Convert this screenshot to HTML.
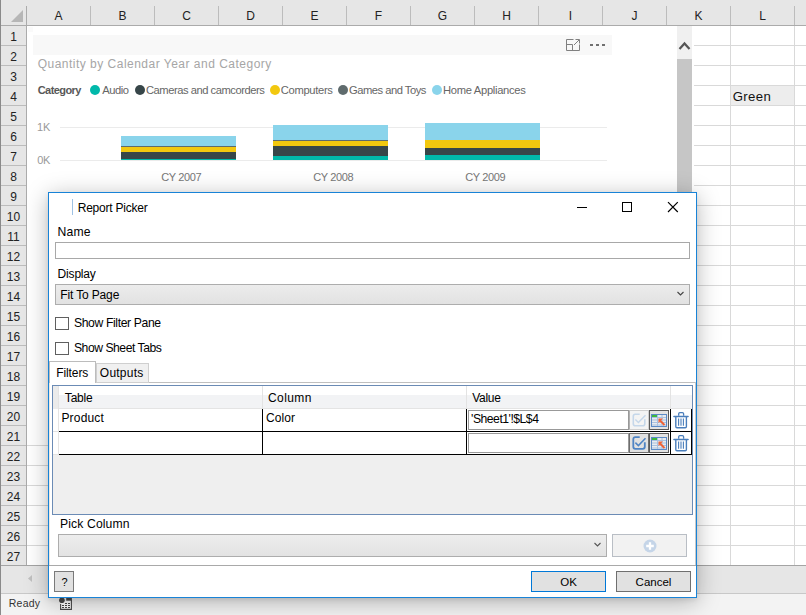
<!DOCTYPE html>
<html><head><meta charset="utf-8"><style>
html,body{margin:0;padding:0;width:806px;height:615px;overflow:hidden;background:#fff;position:relative}
body>div,body>svg{position:absolute;box-sizing:content-box}
.t{font-family:"Liberation Sans",sans-serif;white-space:pre}
</style></head><body>
<div style="left:0px;top:0px;width:806px;height:26px;background:#e6e6e6;"></div>
<div style="left:0px;top:25px;width:806px;height:1px;background:#ababab;"></div>
<div style="left:26px;top:6px;width:1px;height:19px;background:#bcbcbc;"></div>
<div style="left:90px;top:6px;width:1px;height:19px;background:#bcbcbc;"></div>
<div style="left:154px;top:6px;width:1px;height:19px;background:#bcbcbc;"></div>
<div style="left:218px;top:6px;width:1px;height:19px;background:#bcbcbc;"></div>
<div style="left:282px;top:6px;width:1px;height:19px;background:#bcbcbc;"></div>
<div style="left:346px;top:6px;width:1px;height:19px;background:#bcbcbc;"></div>
<div style="left:410px;top:6px;width:1px;height:19px;background:#bcbcbc;"></div>
<div style="left:474px;top:6px;width:1px;height:19px;background:#bcbcbc;"></div>
<div style="left:538px;top:6px;width:1px;height:19px;background:#bcbcbc;"></div>
<div style="left:602px;top:6px;width:1px;height:19px;background:#bcbcbc;"></div>
<div style="left:666px;top:6px;width:1px;height:19px;background:#bcbcbc;"></div>
<div style="left:730px;top:6px;width:1px;height:19px;background:#bcbcbc;"></div>
<div style="left:794px;top:6px;width:1px;height:19px;background:#bcbcbc;"></div>
<div class="t" style="left:-41.5px;width:200px;text-align:center;top:10.44px;font-size:12px;line-height:12px;color:#222;font-weight:normal;">A</div>
<div class="t" style="left:22.5px;width:200px;text-align:center;top:10.44px;font-size:12px;line-height:12px;color:#222;font-weight:normal;">B</div>
<div class="t" style="left:86.5px;width:200px;text-align:center;top:10.44px;font-size:12px;line-height:12px;color:#222;font-weight:normal;">C</div>
<div class="t" style="left:150.5px;width:200px;text-align:center;top:10.44px;font-size:12px;line-height:12px;color:#222;font-weight:normal;">D</div>
<div class="t" style="left:214.5px;width:200px;text-align:center;top:10.44px;font-size:12px;line-height:12px;color:#222;font-weight:normal;">E</div>
<div class="t" style="left:278.5px;width:200px;text-align:center;top:10.44px;font-size:12px;line-height:12px;color:#222;font-weight:normal;">F</div>
<div class="t" style="left:342.5px;width:200px;text-align:center;top:10.44px;font-size:12px;line-height:12px;color:#222;font-weight:normal;">G</div>
<div class="t" style="left:406.5px;width:200px;text-align:center;top:10.44px;font-size:12px;line-height:12px;color:#222;font-weight:normal;">H</div>
<div class="t" style="left:470.5px;width:200px;text-align:center;top:10.44px;font-size:12px;line-height:12px;color:#222;font-weight:normal;">I</div>
<div class="t" style="left:534.5px;width:200px;text-align:center;top:10.44px;font-size:12px;line-height:12px;color:#222;font-weight:normal;">J</div>
<div class="t" style="left:598.5px;width:200px;text-align:center;top:10.44px;font-size:12px;line-height:12px;color:#222;font-weight:normal;">K</div>
<div class="t" style="left:662.5px;width:200px;text-align:center;top:10.44px;font-size:12px;line-height:12px;color:#222;font-weight:normal;">L</div>
<svg style="position:absolute;left:0;top:0" width="26" height="25"><polygon points="23,10 23,22 11,22" fill="#b6b6b6"/></svg>
<div style="left:0px;top:26px;width:26px;height:539px;background:#e6e6e6;"></div>
<div style="left:26px;top:6px;width:1px;height:560px;background:#ababab;"></div>
<div style="left:0px;top:45px;width:26px;height:1px;background:#bcbcbc;"></div>
<div class="t" style="left:-86.5px;width:200px;text-align:center;top:30.84px;font-size:12px;line-height:12px;color:#222;font-weight:normal;">1</div>
<div style="left:0px;top:65px;width:26px;height:1px;background:#bcbcbc;"></div>
<div class="t" style="left:-86.5px;width:200px;text-align:center;top:50.84px;font-size:12px;line-height:12px;color:#222;font-weight:normal;">2</div>
<div style="left:0px;top:85px;width:26px;height:1px;background:#bcbcbc;"></div>
<div class="t" style="left:-86.5px;width:200px;text-align:center;top:70.84px;font-size:12px;line-height:12px;color:#222;font-weight:normal;">3</div>
<div style="left:0px;top:105px;width:26px;height:1px;background:#bcbcbc;"></div>
<div class="t" style="left:-86.5px;width:200px;text-align:center;top:90.84px;font-size:12px;line-height:12px;color:#222;font-weight:normal;">4</div>
<div style="left:0px;top:125px;width:26px;height:1px;background:#bcbcbc;"></div>
<div class="t" style="left:-86.5px;width:200px;text-align:center;top:110.84px;font-size:12px;line-height:12px;color:#222;font-weight:normal;">5</div>
<div style="left:0px;top:145px;width:26px;height:1px;background:#bcbcbc;"></div>
<div class="t" style="left:-86.5px;width:200px;text-align:center;top:130.84px;font-size:12px;line-height:12px;color:#222;font-weight:normal;">6</div>
<div style="left:0px;top:165px;width:26px;height:1px;background:#bcbcbc;"></div>
<div class="t" style="left:-86.5px;width:200px;text-align:center;top:150.84px;font-size:12px;line-height:12px;color:#222;font-weight:normal;">7</div>
<div style="left:0px;top:185px;width:26px;height:1px;background:#bcbcbc;"></div>
<div class="t" style="left:-86.5px;width:200px;text-align:center;top:170.84px;font-size:12px;line-height:12px;color:#222;font-weight:normal;">8</div>
<div style="left:0px;top:205px;width:26px;height:1px;background:#bcbcbc;"></div>
<div class="t" style="left:-86.5px;width:200px;text-align:center;top:190.84px;font-size:12px;line-height:12px;color:#222;font-weight:normal;">9</div>
<div style="left:0px;top:225px;width:26px;height:1px;background:#bcbcbc;"></div>
<div class="t" style="left:-86.5px;width:200px;text-align:center;top:210.84px;font-size:12px;line-height:12px;color:#222;font-weight:normal;">10</div>
<div style="left:0px;top:245px;width:26px;height:1px;background:#bcbcbc;"></div>
<div class="t" style="left:-86.5px;width:200px;text-align:center;top:230.84px;font-size:12px;line-height:12px;color:#222;font-weight:normal;">11</div>
<div style="left:0px;top:265px;width:26px;height:1px;background:#bcbcbc;"></div>
<div class="t" style="left:-86.5px;width:200px;text-align:center;top:250.84px;font-size:12px;line-height:12px;color:#222;font-weight:normal;">12</div>
<div style="left:0px;top:285px;width:26px;height:1px;background:#bcbcbc;"></div>
<div class="t" style="left:-86.5px;width:200px;text-align:center;top:270.84px;font-size:12px;line-height:12px;color:#222;font-weight:normal;">13</div>
<div style="left:0px;top:305px;width:26px;height:1px;background:#bcbcbc;"></div>
<div class="t" style="left:-86.5px;width:200px;text-align:center;top:290.84px;font-size:12px;line-height:12px;color:#222;font-weight:normal;">14</div>
<div style="left:0px;top:325px;width:26px;height:1px;background:#bcbcbc;"></div>
<div class="t" style="left:-86.5px;width:200px;text-align:center;top:310.84px;font-size:12px;line-height:12px;color:#222;font-weight:normal;">15</div>
<div style="left:0px;top:345px;width:26px;height:1px;background:#bcbcbc;"></div>
<div class="t" style="left:-86.5px;width:200px;text-align:center;top:330.84px;font-size:12px;line-height:12px;color:#222;font-weight:normal;">16</div>
<div style="left:0px;top:365px;width:26px;height:1px;background:#bcbcbc;"></div>
<div class="t" style="left:-86.5px;width:200px;text-align:center;top:350.84px;font-size:12px;line-height:12px;color:#222;font-weight:normal;">17</div>
<div style="left:0px;top:385px;width:26px;height:1px;background:#bcbcbc;"></div>
<div class="t" style="left:-86.5px;width:200px;text-align:center;top:370.84px;font-size:12px;line-height:12px;color:#222;font-weight:normal;">18</div>
<div style="left:0px;top:405px;width:26px;height:1px;background:#bcbcbc;"></div>
<div class="t" style="left:-86.5px;width:200px;text-align:center;top:390.84px;font-size:12px;line-height:12px;color:#222;font-weight:normal;">19</div>
<div style="left:0px;top:425px;width:26px;height:1px;background:#bcbcbc;"></div>
<div class="t" style="left:-86.5px;width:200px;text-align:center;top:410.84px;font-size:12px;line-height:12px;color:#222;font-weight:normal;">20</div>
<div style="left:0px;top:445px;width:26px;height:1px;background:#bcbcbc;"></div>
<div class="t" style="left:-86.5px;width:200px;text-align:center;top:430.84px;font-size:12px;line-height:12px;color:#222;font-weight:normal;">21</div>
<div style="left:0px;top:465px;width:26px;height:1px;background:#bcbcbc;"></div>
<div class="t" style="left:-86.5px;width:200px;text-align:center;top:450.84px;font-size:12px;line-height:12px;color:#222;font-weight:normal;">22</div>
<div style="left:0px;top:485px;width:26px;height:1px;background:#bcbcbc;"></div>
<div class="t" style="left:-86.5px;width:200px;text-align:center;top:470.84px;font-size:12px;line-height:12px;color:#222;font-weight:normal;">23</div>
<div style="left:0px;top:505px;width:26px;height:1px;background:#bcbcbc;"></div>
<div class="t" style="left:-86.5px;width:200px;text-align:center;top:490.84px;font-size:12px;line-height:12px;color:#222;font-weight:normal;">24</div>
<div style="left:0px;top:525px;width:26px;height:1px;background:#bcbcbc;"></div>
<div class="t" style="left:-86.5px;width:200px;text-align:center;top:510.84px;font-size:12px;line-height:12px;color:#222;font-weight:normal;">25</div>
<div style="left:0px;top:545px;width:26px;height:1px;background:#bcbcbc;"></div>
<div class="t" style="left:-86.5px;width:200px;text-align:center;top:530.84px;font-size:12px;line-height:12px;color:#222;font-weight:normal;">26</div>
<div style="left:0px;top:565px;width:26px;height:1px;background:#bcbcbc;"></div>
<div class="t" style="left:-86.5px;width:200px;text-align:center;top:550.84px;font-size:12px;line-height:12px;color:#222;font-weight:normal;">27</div>
<div style="left:0px;top:0px;width:1px;height:615px;background:#8a8a8a;"></div>
<div style="left:90px;top:26px;width:1px;height:539px;background:#d9d9d9;"></div>
<div style="left:154px;top:26px;width:1px;height:539px;background:#d9d9d9;"></div>
<div style="left:218px;top:26px;width:1px;height:539px;background:#d9d9d9;"></div>
<div style="left:282px;top:26px;width:1px;height:539px;background:#d9d9d9;"></div>
<div style="left:346px;top:26px;width:1px;height:539px;background:#d9d9d9;"></div>
<div style="left:410px;top:26px;width:1px;height:539px;background:#d9d9d9;"></div>
<div style="left:474px;top:26px;width:1px;height:539px;background:#d9d9d9;"></div>
<div style="left:538px;top:26px;width:1px;height:539px;background:#d9d9d9;"></div>
<div style="left:602px;top:26px;width:1px;height:539px;background:#d9d9d9;"></div>
<div style="left:666px;top:26px;width:1px;height:539px;background:#d9d9d9;"></div>
<div style="left:730px;top:26px;width:1px;height:539px;background:#d9d9d9;"></div>
<div style="left:794px;top:26px;width:1px;height:539px;background:#d9d9d9;"></div>
<div style="left:858px;top:26px;width:1px;height:539px;background:#d9d9d9;"></div>
<div style="left:27px;top:45px;width:779px;height:1px;background:#d9d9d9;"></div>
<div style="left:27px;top:65px;width:779px;height:1px;background:#d9d9d9;"></div>
<div style="left:27px;top:85px;width:779px;height:1px;background:#d9d9d9;"></div>
<div style="left:27px;top:105px;width:779px;height:1px;background:#d9d9d9;"></div>
<div style="left:27px;top:125px;width:779px;height:1px;background:#d9d9d9;"></div>
<div style="left:27px;top:145px;width:779px;height:1px;background:#d9d9d9;"></div>
<div style="left:27px;top:165px;width:779px;height:1px;background:#d9d9d9;"></div>
<div style="left:27px;top:185px;width:779px;height:1px;background:#d9d9d9;"></div>
<div style="left:27px;top:205px;width:779px;height:1px;background:#d9d9d9;"></div>
<div style="left:27px;top:225px;width:779px;height:1px;background:#d9d9d9;"></div>
<div style="left:27px;top:245px;width:779px;height:1px;background:#d9d9d9;"></div>
<div style="left:27px;top:265px;width:779px;height:1px;background:#d9d9d9;"></div>
<div style="left:27px;top:285px;width:779px;height:1px;background:#d9d9d9;"></div>
<div style="left:27px;top:305px;width:779px;height:1px;background:#d9d9d9;"></div>
<div style="left:27px;top:325px;width:779px;height:1px;background:#d9d9d9;"></div>
<div style="left:27px;top:345px;width:779px;height:1px;background:#d9d9d9;"></div>
<div style="left:27px;top:365px;width:779px;height:1px;background:#d9d9d9;"></div>
<div style="left:27px;top:385px;width:779px;height:1px;background:#d9d9d9;"></div>
<div style="left:27px;top:405px;width:779px;height:1px;background:#d9d9d9;"></div>
<div style="left:27px;top:425px;width:779px;height:1px;background:#d9d9d9;"></div>
<div style="left:27px;top:445px;width:779px;height:1px;background:#d9d9d9;"></div>
<div style="left:27px;top:465px;width:779px;height:1px;background:#d9d9d9;"></div>
<div style="left:27px;top:485px;width:779px;height:1px;background:#d9d9d9;"></div>
<div style="left:27px;top:505px;width:779px;height:1px;background:#d9d9d9;"></div>
<div style="left:27px;top:525px;width:779px;height:1px;background:#d9d9d9;"></div>
<div style="left:27px;top:545px;width:779px;height:1px;background:#d9d9d9;"></div>
<div style="left:27px;top:565px;width:779px;height:1px;background:#d9d9d9;"></div>
<div style="left:731px;top:86px;width:63px;height:19px;background:#ededed;"></div>
<div class="t" style="left:732.74px;top:90.03px;font-size:13.2px;line-height:13.2px;color:#111;font-weight:normal;letter-spacing:0.350px;">Green</div>
<div style="left:0px;top:566px;width:806px;height:27px;background:#e6e6e6;"></div>
<div style="left:0px;top:565px;width:806px;height:1px;background:#a4a4a4;"></div>
<div style="left:0px;top:593px;width:806px;height:1px;background:#c8c8c8;"></div>
<svg style="position:absolute;left:0;top:566" width="40" height="27"><polygon points="32,9 32,16 28,12.5" fill="#c0c0c0"/></svg>
<div style="left:0px;top:594px;width:806px;height:21px;background:#f3f3f3;"></div>
<div style="left:0px;top:0px;width:1px;height:615px;background:#8a8a8a;"></div>
<div class="t" style="left:8.82px;top:598.21px;font-size:10.5px;line-height:10.5px;color:#333;font-weight:normal;letter-spacing:0.214px;">Ready</div>
<svg style="position:absolute;left:54px;top:593px" width="24" height="22"><rect x="7" y="8" width="10" height="8" fill="#fff"/><circle cx="7.9" cy="7.2" r="2.8" fill="#4a4a4a"/><rect x="12.2" y="3" width="5.7" height="4.7" fill="#4a4a4a"/><path d="M17.4 7V16.4H6.6V11" fill="none" stroke="#4a4a4a" stroke-width="1.1"/><path d="M11 10.5h2M14 10.5h2M8 12.5h2M11 12.5h2M14 12.5h2M8 14.5h2M11 14.5h2M14 14.5h2" stroke="#4a4a4a" stroke-width="1"/></svg>
<div style="left:27px;top:26px;width:667px;height:419px;background:#fff;"></div>
<div style="left:33px;top:35px;width:579px;height:20px;background:#f8f8f8;"></div>
<div style="left:28px;top:27px;width:5px;height:5px;background:#fafafa;"></div>
<svg style="position:absolute;left:565px;top:38px" width="17" height="14"><path d="M8.5 1.5H1.5V12.5H14.5V6.5M1.5 6.5H7.5V12.5M9 7L14 2M10.5 1.5H14.5V5.5" fill="none" stroke="#808080" stroke-width="1"/></svg>
<div style="left:590px;top:44px;width:3px;height:2px;background:#707070;"></div>
<div style="left:596px;top:44px;width:3px;height:2px;background:#707070;"></div>
<div style="left:602px;top:44px;width:3px;height:2px;background:#707070;"></div>
<div class="t" style="left:37.65px;top:58.44px;font-size:12px;line-height:12px;color:#a6a6a6;font-weight:normal;letter-spacing:0.491px;">Quantity by Calendar Year and Category</div>
<div class="t" style="left:37.74px;top:85.29px;font-size:11px;line-height:11px;color:#585858;font-weight:bold;letter-spacing:-0.566px;">Category</div>
<div style="left:90px;top:85px;width:10px;height:10px;border-radius:50%;background:#01B8AA"></div>
<div class="t" style="left:102.15px;top:84.92px;font-size:11.2px;line-height:11.2px;color:#666;font-weight:normal;letter-spacing:-0.435px;">Audio</div>
<div style="left:134.5px;top:85px;width:10px;height:10px;border-radius:50%;background:#374649"></div>
<div class="t" style="left:145.94px;top:84.92px;font-size:11.2px;line-height:11.2px;color:#666;font-weight:normal;letter-spacing:-0.465px;">Cameras and camcorders</div>
<div style="left:269.7px;top:85px;width:10px;height:10px;border-radius:50%;background:#F2C80F"></div>
<div class="t" style="left:280.74px;top:84.92px;font-size:11.2px;line-height:11.2px;color:#666;font-weight:normal;letter-spacing:-0.313px;">Computers</div>
<div style="left:338px;top:85px;width:10px;height:10px;border-radius:50%;background:#5F6B6D"></div>
<div class="t" style="left:349.04px;top:84.92px;font-size:11.2px;line-height:11.2px;color:#666;font-weight:normal;letter-spacing:-0.491px;">Games and Toys</div>
<div style="left:431.8px;top:85px;width:10px;height:10px;border-radius:50%;background:#8AD4EB"></div>
<div class="t" style="left:442.97px;top:84.92px;font-size:11.2px;line-height:11.2px;color:#666;font-weight:normal;letter-spacing:-0.301px;">Home Appliances</div>
<div style="left:60px;top:127px;width:547px;height:1px;background:#ebebeb;"></div>
<div style="left:60px;top:160px;width:547px;height:1px;background:#ebebeb;"></div>
<div class="t" style="left:36.88px;top:122.29px;font-size:11px;line-height:11px;color:#999;font-weight:normal;letter-spacing:0.033px;">1K</div>
<div class="t" style="left:37.29px;top:154.89px;font-size:11px;line-height:11px;color:#999;font-weight:normal;letter-spacing:-0.379px;">0K</div>
<div style="left:121px;top:136px;width:115px;height:10px;background:#8AD4EB;"></div>
<div style="left:121px;top:146px;width:115px;height:1px;background:#5F6B6D;"></div>
<div style="left:121px;top:147px;width:115px;height:5px;background:#F2C80F;"></div>
<div style="left:121px;top:152px;width:115px;height:7px;background:#374649;"></div>
<div style="left:121px;top:159px;width:115px;height:1px;background:#01B8AA;"></div>
<div style="left:273px;top:125px;width:115px;height:15px;background:#8AD4EB;"></div>
<div style="left:273px;top:140px;width:115px;height:1px;background:#5F6B6D;"></div>
<div style="left:273px;top:141px;width:115px;height:5px;background:#F2C80F;"></div>
<div style="left:273px;top:146px;width:115px;height:10px;background:#374649;"></div>
<div style="left:273px;top:156px;width:115px;height:4px;background:#01B8AA;"></div>
<div style="left:425px;top:123px;width:115px;height:17px;background:#8AD4EB;"></div>
<div style="left:425px;top:140px;width:115px;height:8px;background:#F2C80F;"></div>
<div style="left:425px;top:148px;width:115px;height:7px;background:#374649;"></div>
<div style="left:425px;top:155px;width:115px;height:5px;background:#01B8AA;"></div>
<div class="t" style="left:161.15px;top:172.49px;font-size:11px;line-height:11px;color:#777;font-weight:normal;letter-spacing:-0.371px;">CY 2007</div>
<div class="t" style="left:313.25px;top:172.49px;font-size:11px;line-height:11px;color:#777;font-weight:normal;letter-spacing:-0.378px;">CY 2008</div>
<div class="t" style="left:465.15px;top:172.49px;font-size:11px;line-height:11px;color:#777;font-weight:normal;letter-spacing:-0.371px;">CY 2009</div>
<div style="left:677px;top:26px;width:15px;height:419px;background:#f0f0f0;"></div>
<div style="left:677px;top:59px;width:15px;height:386px;background:#c6c6c6;"></div>
<svg style="position:absolute;left:677px;top:38px" width="15" height="16"><path d="M2.5 11L7.5 5.5L12.5 11" fill="none" stroke="#555" stroke-width="2.2"/></svg>
<div style="left:48px;top:192px;width:649px;height:406px;box-shadow:0 4px 22px rgba(0,0,0,0.28),0 2px 5px rgba(0,0,0,0.08);background:#fff"></div>
<div style="left:48px;top:192px;width:647px;height:404px;border:1px solid #1883d7;background:#fff;"></div>
<div style="left:72px;top:199px;width:1px;height:16px;background:#9ec2e4;"></div>
<div class="t" style="left:77.70px;top:202.14px;font-size:12px;line-height:12px;color:#000;font-weight:normal;letter-spacing:-0.225px;">Report Picker</div>
<div style="left:577px;top:207px;width:10px;height:1px;background:#000;"></div>
<div style="left:622px;top:202px;width:8px;height:8px;border:1px solid #000;background:transparent;"></div>
<svg style="position:absolute;left:667px;top:201px" width="13" height="13"><path d="M1 1.2L10.8 11M10.8 1.2L1 11" stroke="#000" stroke-width="1.2"/></svg>
<div class="t" style="left:57.58px;top:226.27px;font-size:12.2px;line-height:12.2px;color:#000;font-weight:normal;letter-spacing:0.131px;">Name</div>
<div style="left:55px;top:242px;width:633px;height:15px;border:1px solid #a8a8a8;background:#fff;"></div>
<div class="t" style="left:57.60px;top:268.44px;font-size:12px;line-height:12px;color:#000;font-weight:normal;letter-spacing:-0.183px;">Display</div>
<div style="left:55px;top:284px;width:633px;height:19px;border:1px solid #adadad;background:linear-gradient(#ececec,#e2e2e2);"></div>
<svg style="position:absolute;left:676px;top:290px" width="10" height="8"><path d="M1.5 2L4.5 5L7.5 2" fill="none" stroke="#444" stroke-width="1.1"/></svg>
<div class="t" style="left:60.30px;top:289.44px;font-size:12px;line-height:12px;color:#000;font-weight:normal;letter-spacing:-0.145px;">Fit To Page</div>
<div style="left:55px;top:317px;width:12px;height:11px;border:1px solid #5f5f5f;background:#fff;"></div>
<div class="t" style="left:73.94px;top:316.97px;font-size:12.2px;line-height:12.2px;color:#000;font-weight:normal;letter-spacing:-0.374px;">Show Filter Pane</div>
<div style="left:55px;top:342px;width:12px;height:11px;border:1px solid #5f5f5f;background:#fff;"></div>
<div class="t" style="left:73.94px;top:341.77px;font-size:12.2px;line-height:12.2px;color:#000;font-weight:normal;letter-spacing:-0.481px;">Show Sheet Tabs</div>
<div style="left:49px;top:382px;width:647px;height:1px;background:#bfbfbf;"></div>
<div style="left:49px;top:383px;width:1px;height:182px;background:#ece8e2;"></div>
<div style="left:695px;top:382px;width:1px;height:184px;background:#c8c8c8;"></div>
<div style="left:49px;top:565px;width:647px;height:1px;background:#a9a9a9;"></div>
<div style="left:96px;top:363px;width:51px;height:18px;border:1px solid #cfcfcf;background:#f0f0f0;"></div>
<div style="left:49px;top:361px;width:45px;height:20px;border:1px solid #bcbcbc;background:#fff;border-bottom:none;height:21px"></div>
<div class="t" style="left:56.20px;top:366.64px;font-size:12px;line-height:12px;color:#000;font-weight:normal;letter-spacing:-0.083px;">Filters</div>
<div class="t" style="left:99.85px;top:367.24px;font-size:12px;line-height:12px;color:#000;font-weight:normal;letter-spacing:0.225px;">Outputs</div>
<div style="left:52px;top:385px;width:639px;height:128px;border:1px solid #6b8bb5;background:#efefef;"></div>
<div style="left:53px;top:386px;width:639px;height:23px;background:linear-gradient(#fff 0,#fff 9px,#f2f3f5 9px);"></div>
<div style="left:53px;top:409px;width:6px;height:46px;background:#fff;"></div>
<div style="left:53px;top:408px;width:639px;height:1px;background:#e4e4e4;"></div>
<div style="left:53px;top:386px;width:5px;height:23px;background:#ebebeb;"></div>
<div style="left:58px;top:409px;width:1px;height:46px;background:#e4e4e4;"></div>
<div style="left:53px;top:431px;width:5px;height:1px;background:#e2e2e2;"></div>
<div style="left:53px;top:454px;width:5px;height:1px;background:#e2e2e2;"></div>
<div style="left:58px;top:386px;width:1px;height:23px;background:#e3e3e3;"></div>
<div style="left:262px;top:386px;width:1px;height:23px;background:#e3e3e3;"></div>
<div style="left:466px;top:386px;width:1px;height:23px;background:#e3e3e3;"></div>
<div style="left:670px;top:386px;width:1px;height:23px;background:#e3e3e3;"></div>
<div style="left:59px;top:409px;width:633px;height:22px;background:#fff;"></div>
<div style="left:59px;top:432px;width:633px;height:22px;background:#fff;"></div>
<div style="left:59px;top:431px;width:633px;height:1px;background:#000;"></div>
<div style="left:59px;top:454px;width:633px;height:1px;background:#000;"></div>
<div style="left:262px;top:409px;width:1px;height:46px;background:#000;"></div>
<div style="left:466px;top:409px;width:1px;height:46px;background:#000;"></div>
<div style="left:670px;top:409px;width:1px;height:46px;background:#000;"></div>
<div style="left:691px;top:409px;width:1px;height:46px;background:#000;"></div>
<div class="t" style="left:64.85px;top:392.34px;font-size:12px;line-height:12px;color:#000;font-weight:normal;letter-spacing:-0.200px;">Table</div>
<div class="t" style="left:268.00px;top:392.34px;font-size:12px;line-height:12px;color:#000;font-weight:normal;letter-spacing:0.400px;">Column</div>
<div class="t" style="left:472.15px;top:392.34px;font-size:12px;line-height:12px;color:#000;font-weight:normal;letter-spacing:-0.263px;">Value</div>
<div class="t" style="left:61.40px;top:412.24px;font-size:12px;line-height:12px;color:#000;font-weight:normal;letter-spacing:0.192px;">Product</div>
<div class="t" style="left:266.10px;top:412.34px;font-size:12px;line-height:12px;color:#000;font-weight:normal;letter-spacing:0.050px;">Color</div>
<div style="left:468px;top:410px;width:159px;height:18px;border:1px solid #999;background:#fff;"></div>
<div style="left:468px;top:433px;width:159px;height:18px;border:1px solid #999;background:#fff;"></div>
<div class="t" style="left:471.09px;top:412.97px;font-size:12.2px;line-height:12.2px;color:#000;font-weight:normal;letter-spacing:-0.495px;">'Sheet1'!$L$4</div>
<div style="left:629px;top:410px;width:18px;height:18px;border:1px solid #cfcfcf;background:#f4f4f4;border-left-color:#b0b0b0"></div>
<svg style="position:absolute;left:629px;top:410px" width="20" height="20"><path d="M10.7 4.2H6.3Q4.3 4.2 4.3 6.2V13.8Q4.3 15.8 6.3 15.8H13.8Q15.8 15.8 15.8 13.8V9.3" fill="none" stroke="#c5d7ea" stroke-width="1.6"/><path d="M6.4 9.6L9.4 12.6L16.5 5.2" fill="none" stroke="#c5d7ea" stroke-width="1.4"/></svg>
<div style="left:649px;top:410px;width:18px;height:18px;border:1px solid #5a5a5a;background:#e3e3e3;"></div>
<svg style="position:absolute;left:649px;top:410px" width="20" height="20"><rect x="2.5" y="4.5" width="15" height="12" fill="#e8ebef" stroke="#5b8ac6"/><rect x="3" y="5" width="5.5" height="2.5" fill="#3db83d"/><path d="M3 7.5H17M3 10H17M3 12.5H17M3 15H17M8.5 5V16M13 5V16" stroke="#a9c1e0" stroke-width="1"/><path d="M15.5 15L11 10.5" fill="none" stroke="#f26336" stroke-width="2"/><path d="M9.5 8.5H14L9.5 13Z" fill="#f26336"/></svg>
<svg style="position:absolute;left:673px;top:411px" width="16" height="18"><path d="M5.7 4.8V2.8Q5.7 1.6 6.9 1.6H9.4Q10.6 1.6 10.6 2.8V4.8" fill="none" stroke="#4a7ebb" stroke-width="1.3"/><path d="M1 5.5H15" stroke="#4a7ebb" stroke-width="1.6" stroke-linecap="round"/><path d="M2.8 6V15.5Q2.8 16.8 4 16.8H12.2Q13.4 16.8 13.4 15.5V6" fill="none" stroke="#4a7ebb" stroke-width="1.4"/><path d="M5.6 7.5V14.7M8 7.5V14.7M10.4 7.5V14.7" stroke="#4a7ebb" stroke-width="1.1"/></svg>
<div style="left:629px;top:433px;width:18px;height:18px;border:1px solid #6e6e6e;background:#e1e1e1;"></div>
<svg style="position:absolute;left:629px;top:433px" width="20" height="20"><path d="M10.7 4.2H6.3Q4.3 4.2 4.3 6.2V13.8Q4.3 15.8 6.3 15.8H13.8Q15.8 15.8 15.8 13.8V9.3" fill="none" stroke="#4f84c4" stroke-width="1.8"/><path d="M6.4 9.6L9.4 12.6L16.5 5.2" fill="none" stroke="#4f84c4" stroke-width="1.5"/></svg>
<div style="left:649px;top:433px;width:18px;height:18px;border:1px solid #5a5a5a;background:#e3e3e3;"></div>
<svg style="position:absolute;left:649px;top:433px" width="20" height="20"><rect x="2.5" y="4.5" width="15" height="12" fill="#e8ebef" stroke="#5b8ac6"/><rect x="3" y="5" width="5.5" height="2.5" fill="#3db83d"/><path d="M3 7.5H17M3 10H17M3 12.5H17M3 15H17M8.5 5V16M13 5V16" stroke="#a9c1e0" stroke-width="1"/><path d="M15.5 15L11 10.5" fill="none" stroke="#f26336" stroke-width="2"/><path d="M9.5 8.5H14L9.5 13Z" fill="#f26336"/></svg>
<svg style="position:absolute;left:673px;top:434px" width="16" height="18"><path d="M5.7 4.8V2.8Q5.7 1.6 6.9 1.6H9.4Q10.6 1.6 10.6 2.8V4.8" fill="none" stroke="#4a7ebb" stroke-width="1.3"/><path d="M1 5.5H15" stroke="#4a7ebb" stroke-width="1.6" stroke-linecap="round"/><path d="M2.8 6V15.5Q2.8 16.8 4 16.8H12.2Q13.4 16.8 13.4 15.5V6" fill="none" stroke="#4a7ebb" stroke-width="1.4"/><path d="M5.6 7.5V14.7M8 7.5V14.7M10.4 7.5V14.7" stroke="#4a7ebb" stroke-width="1.1"/></svg>
<div class="t" style="left:60.08px;top:518.27px;font-size:12.2px;line-height:12.2px;color:#000;font-weight:normal;letter-spacing:0.101px;">Pick Column</div>
<div style="left:58px;top:534px;width:547px;height:21px;border:1px solid #adadad;background:linear-gradient(#ededed,#e3e3e3);"></div>
<svg style="position:absolute;left:593px;top:541px" width="10" height="8"><path d="M1.5 2L4.5 5L7.5 2" fill="none" stroke="#555" stroke-width="1.1"/></svg>
<div style="left:612px;top:534px;width:73px;height:21px;border:1px solid #b9bec5;background:#f2f2f2;"></div>
<svg style="position:absolute;left:643px;top:539px" width="14" height="14"><circle cx="7" cy="7" r="6.5" fill="#c5d5e8"/><path d="M7 3.2V10.8M3.2 7H10.8" stroke="#fff" stroke-width="2.3"/></svg>
<div style="left:54px;top:571px;width:18px;height:19px;border:1px solid #7a7a7a;background:#e1e1e1;"></div>
<div class="t" style="left:-35.5px;width:200px;text-align:center;top:577.29px;font-size:11px;line-height:11px;color:#000;font-weight:normal;">?</div>
<div style="left:531px;top:571px;width:73px;height:19px;border:1px solid #0078d7;background:#e1e1e1;"></div>
<div class="t" style="left:468.5px;width:200px;text-align:center;top:577.07px;font-size:11.5px;line-height:11.5px;color:#000;font-weight:normal;">OK</div>
<div style="left:616px;top:571px;width:73px;height:19px;border:1px solid #6f6f6f;background:#e1e1e1;"></div>
<div class="t" style="left:553.5px;width:200px;text-align:center;top:577.07px;font-size:11.5px;line-height:11.5px;color:#000;font-weight:normal;">Cancel</div>
</body></html>
